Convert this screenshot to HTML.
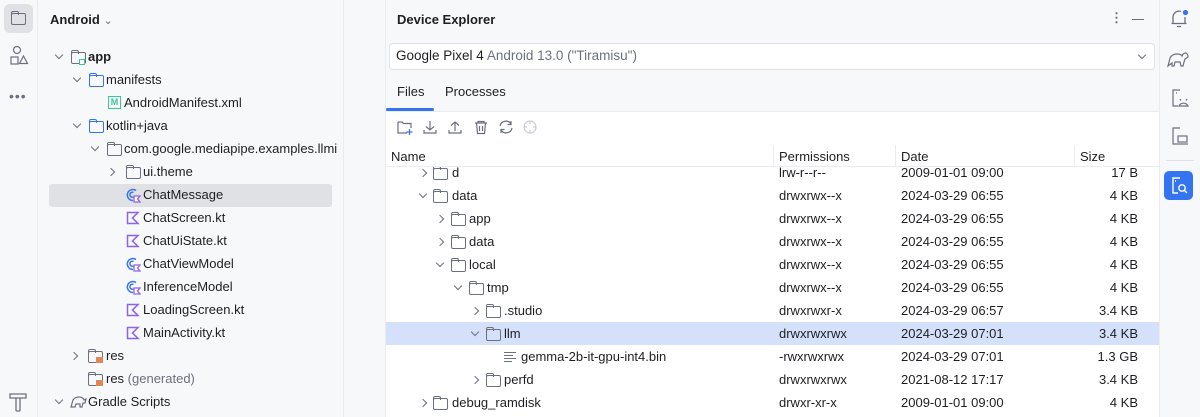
<!DOCTYPE html>
<html><head><style>
*{margin:0;padding:0;box-sizing:border-box}
body{width:1200px;height:417px;overflow:hidden;background:#f7f8fa;font-family:"Liberation Sans",sans-serif;font-size:13px;color:#1e1f22;position:relative}
.a{position:absolute;white-space:nowrap}
.vl{position:absolute;top:0;bottom:0;width:1px;background:#ebecf0}
.row{position:absolute;left:0;right:0;height:23px;line-height:23px}
.chev{position:absolute;width:6px;height:6px;border-right:1.2px solid #6c707e;border-bottom:1.2px solid #6c707e}
.dn{transform:rotate(45deg)}
.rt{transform:rotate(-45deg)}
.fold{position:absolute;width:15px;height:12px;border:1.2px solid #6c707e;border-radius:2px}
.fold:before{content:"";position:absolute;left:-1.2px;top:-3px;width:6px;height:3px;border:1.2px solid #6c707e;border-bottom:none;border-radius:2px 2px 0 0}
.bf{border-color:#3574f0}.bf:before{border-color:#3574f0}
svg.i{position:absolute;top:4px}
</style></head><body>
<!-- left strip -->
<div class="vl" style="left:37px"></div>
<div class="a" style="left:4px;top:4px;width:29px;height:29px;background:#dfe1e5;border-radius:6px"></div>
<div class="fold" style="left:11px;top:13px;width:15px;height:12px"></div>
<svg class="a" style="left:9px;top:45px" width="20" height="22" viewBox="0 0 20 22" fill="none" stroke="#6c707e" stroke-width="1.2"><circle cx="8" cy="5" r="3.5"/><rect x="2" y="12" width="7" height="7"/><path d="M14.5 11 L18.5 18.5 H10.5 Z"/></svg>
<div class="a" style="left:9px;top:88px;font-size:14px;color:#6c707e;letter-spacing:1px">•••</div>
<svg class="a" style="left:8px;top:391px" width="20" height="22" viewBox="0 0 20 22" fill="none" stroke="#6c707e" stroke-width="1.3"><path d="M2 3 H18 V7 H2 Z M8 7 V20 M12 7 V20 M8 20 H12"/></svg>
<!-- project panel -->
<div class="vl" style="left:343px"></div>
<div class="vl" style="left:385px"></div>
<div class="a" style="left:50px;top:12px;font-weight:bold;font-size:13px">Android <span style="font-weight:normal;color:#6c707e;font-size:11px">⌄</span></div>
<div class="a" style="left:49px;top:184px;width:283px;height:23px;background:#dfe1e5;border-radius:3px"></div>
<div style="position:absolute;left:0;top:45px;width:343px">
 <div class="row" style="top:0"><i class="chev dn" style="left:56px;top:7px"></i><i class="fold" style="left:71px;top:7px"></i><i class="a" style="left:79px;top:14px;width:6px;height:6px;border:1.3px solid #3fc59b;background:#fff"></i><span class="a" style="left:88px;font-weight:bold">app</span></div>
 <div class="row" style="top:23px"><i class="chev dn" style="left:74px;top:7px"></i><i class="fold bf" style="left:89px;top:7px"></i><span class="a" style="left:106px">manifests</span></div>
 <div class="row" style="top:46px"><i class="a" style="left:108px;top:5px;width:13px;height:13px;border:1.3px solid #3fc59b;font-size:9px;line-height:10px;text-align:center;color:#3fc59b;font-weight:bold;font-style:normal">M</i><span class="a" style="left:124px">AndroidManifest.xml</span></div>
 <div class="row" style="top:69px"><i class="chev dn" style="left:74px;top:7px"></i><i class="fold bf" style="left:89px;top:7px"></i><span class="a" style="left:106px">kotlin+java</span></div>
 <div class="row" style="top:92px"><i class="chev dn" style="left:92px;top:7px"></i><i class="fold" style="left:107px;top:7px"></i><span class="a" style="left:124px">com.google.mediapipe.examples.llmi</span></div>
 <div class="row" style="top:115px"><i class="chev rt" style="left:108px;top:9px"></i><i class="fold" style="left:126px;top:7px"></i><span class="a" style="left:143px">ui.theme</span></div>
 <div class="row" style="top:138px"><svg class="i" style="left:125px" width="16" height="16" viewBox="0 0 16 16" fill="none"><path d="M11 3.5 A5.5 5.5 0 1 0 8 13.5" stroke="#3574f0" stroke-width="1.5"/><path d="M8.5 5.5 A2.5 2.5 0 1 0 8.5 10" stroke="#3574f0" stroke-width="1.4"/><path d="M9 9 H15 L12.5 12 L15 15 H9 Z" stroke="#8d63e8" stroke-width="1.3" fill="#fff"/></svg><span class="a" style="left:143px">ChatMessage</span></div>
 <div class="row" style="top:161px"><svg class="i" style="left:126px;top:5px" width="14" height="14" viewBox="0 0 14 14" fill="none" stroke="#8d63e8" stroke-width="1.5"><path d="M1.5 1.5 H12 L6.5 7 L12 12.5 H1.5 Z"/></svg><span class="a" style="left:143px">ChatScreen.kt</span></div>
 <div class="row" style="top:184px"><svg class="i" style="left:126px;top:5px" width="14" height="14" viewBox="0 0 14 14" fill="none" stroke="#8d63e8" stroke-width="1.5"><path d="M1.5 1.5 H12 L6.5 7 L12 12.5 H1.5 Z"/></svg><span class="a" style="left:143px">ChatUiState.kt</span></div>
 <div class="row" style="top:207px"><svg class="i" style="left:125px" width="16" height="16" viewBox="0 0 16 16" fill="none"><path d="M11 3.5 A5.5 5.5 0 1 0 8 13.5" stroke="#3574f0" stroke-width="1.5"/><path d="M8.5 5.5 A2.5 2.5 0 1 0 8.5 10" stroke="#3574f0" stroke-width="1.4"/><path d="M9 9 H15 L12.5 12 L15 15 H9 Z" stroke="#8d63e8" stroke-width="1.3" fill="#fff"/></svg><span class="a" style="left:143px">ChatViewModel</span></div>
 <div class="row" style="top:230px"><svg class="i" style="left:125px" width="16" height="16" viewBox="0 0 16 16" fill="none"><path d="M11 3.5 A5.5 5.5 0 1 0 8 13.5" stroke="#3574f0" stroke-width="1.5"/><path d="M8.5 5.5 A2.5 2.5 0 1 0 8.5 10" stroke="#3574f0" stroke-width="1.4"/><path d="M9 9 H15 L12.5 12 L15 15 H9 Z" stroke="#8d63e8" stroke-width="1.3" fill="#fff"/></svg><span class="a" style="left:143px">InferenceModel</span></div>
 <div class="row" style="top:253px"><svg class="i" style="left:126px;top:5px" width="14" height="14" viewBox="0 0 14 14" fill="none" stroke="#8d63e8" stroke-width="1.5"><path d="M1.5 1.5 H12 L6.5 7 L12 12.5 H1.5 Z"/></svg><span class="a" style="left:143px">LoadingScreen.kt</span></div>
 <div class="row" style="top:276px"><svg class="i" style="left:126px;top:5px" width="14" height="14" viewBox="0 0 14 14" fill="none" stroke="#8d63e8" stroke-width="1.5"><path d="M1.5 1.5 H12 L6.5 7 L12 12.5 H1.5 Z"/></svg><span class="a" style="left:143px">MainActivity.kt</span></div>
 <div class="row" style="top:299px"><i class="chev rt" style="left:71px;top:9px"></i><i class="fold" style="left:88px;top:7px"></i><i class="a" style="left:96px;top:13px;width:7px;height:6px;background:#e08855"></i><span class="a" style="left:106px">res</span></div>
 <div class="row" style="top:322px"><i class="fold" style="left:88px;top:7px"></i><i class="a" style="left:96px;top:13px;width:7px;height:6px;background:#e08855"></i><span class="a" style="left:106px">res <span style="color:#6c707e">(generated)</span></span></div>
 <div class="row" style="top:345px"><i class="chev dn" style="left:56px;top:7px"></i><svg class="i" style="left:69px;top:5px" width="18" height="14" viewBox="0 0 18 14" fill="none" stroke="#6c707e" stroke-width="1.2"><path d="M2 12 L4 5 Q6 2 10 2 Q14 2 15 5 L17 4 L16 8 L14 8 L13 12 H11 L11 9 H7 L6 12 Z"/></svg><span class="a" style="left:88px">Gradle Scripts</span></div>
</div>
<!-- device explorer -->
<div class="a" style="left:397px;top:12px;font-weight:bold">Device Explorer</div>
<div class="a" style="left:1110px;top:10px;color:#6c707e;font-weight:bold">⋮</div>
<div class="a" style="left:1132px;top:19px;width:12px;height:1.3px;background:#6c707e"></div>
<div class="a" style="left:389px;top:43px;width:766px;height:27px;background:#fff;border:1px solid #dfe1e5;border-radius:4px"></div>
<div class="a" style="left:396px;top:48px;font-size:13.5px">Google Pixel 4 <span style="color:#6c707e">Android 13.0 ("Tiramisu")</span></div>
<i class="chev dn" style="left:1139px;top:52px"></i>
<div class="a" style="left:397px;top:84px">Files</div>
<div class="a" style="left:445px;top:84px">Processes</div>
<div class="a" style="left:386px;top:108px;width:48px;height:3px;background:#3574f0;border-radius:2px"></div>
<div class="a" style="left:386px;top:111px;width:773px;height:1px;background:#ebecf0"></div>
<div class="a" style="left:386px;top:112px;width:773px;height:305px;background:#fff"></div>
<svg class="a" style="left:396px;top:118px" width="150" height="18" viewBox="0 0 150 18" fill="none" stroke="#6c707e" stroke-width="1.2">
 <path d="M2 4 H6 L7.5 5.5 H15 V10 M11 15 H2 V4"/><path d="M13.5 11 V17 M10.5 14 H16.5" stroke="#3574f0"/>
 <path d="M34 3 V12 M30 8.5 L34 12 L38 8.5 M28 12 V15 H40 V12"/>
 <path d="M59 13 V4 M55 7.5 L59 4 L63 7.5 M53 12 V15 H65 V12"/>
 <path d="M79 5 H91 M82 5 V3.5 H88 V5 M80.5 5 L81.5 15.5 H88.5 L89.5 5 M83.5 8 V13 M86.5 8 V13"/>
 <path d="M104 8 A6 6 0 0 1 115 6 M116 10 A6 6 0 0 1 105 12 M115 3 V6.5 H111.5 M105 15 V11.5 H108.5"/>
 <circle cx="134" cy="9" r="6" stroke="#c9ccd6"/><path d="M134 3 V6 M134 12 V15 M128 9 H131 M137 9 H140" stroke="#c9ccd6"/>
</svg>
<div class="a" style="left:386px;top:145px;width:773px;height:22px;background:#fff;border-bottom:1px solid #ebecf0"></div>
<div class="a" style="left:773px;top:145px;width:1px;height:22px;background:#ebecf0"></div>
<div class="a" style="left:895px;top:145px;width:1px;height:22px;background:#ebecf0"></div>
<div class="a" style="left:1074px;top:145px;width:1px;height:22px;background:#ebecf0"></div>
<div class="a" style="left:391px;top:149px">Name</div>
<div class="a" style="left:779px;top:149px">Permissions</div>
<div class="a" style="left:901px;top:149px">Date</div>
<div class="a" style="left:1080px;top:149px">Size</div>
<div class="a" style="left:386px;top:322px;width:773px;height:23px;background:#d5e1fb"></div>
<div style="position:absolute;left:386px;top:167px;width:773px;height:250px;overflow:hidden">
<div style="position:absolute;left:0;top:-6px;width:773px">
 <div class="row" style="top:0"><i class="chev rt" style="left:34px;top:9px"></i><i class="fold" style="left:47px;top:7px"></i><span class="a" style="left:66px">d</span><span class="a" style="left:393px">lrw-r--r--</span><span class="a" style="left:515px">2009-01-01 09:00</span><span class="a" style="right:21px">17 B</span></div>
 <div class="row" style="top:23px"><i class="chev dn" style="left:34px;top:7px"></i><i class="fold" style="left:47px;top:7px"></i><span class="a" style="left:66px">data</span><span class="a" style="left:393px">drwxrwx--x</span><span class="a" style="left:515px">2024-03-29 06:55</span><span class="a" style="right:21px">4 KB</span></div>
 <div class="row" style="top:46px"><i class="chev rt" style="left:51px;top:9px"></i><i class="fold" style="left:65px;top:7px"></i><span class="a" style="left:83px">app</span><span class="a" style="left:393px">drwxrwx--x</span><span class="a" style="left:515px">2024-03-29 06:55</span><span class="a" style="right:21px">4 KB</span></div>
 <div class="row" style="top:69px"><i class="chev rt" style="left:51px;top:9px"></i><i class="fold" style="left:65px;top:7px"></i><span class="a" style="left:83px">data</span><span class="a" style="left:393px">drwxrwx--x</span><span class="a" style="left:515px">2024-03-29 06:55</span><span class="a" style="right:21px">4 KB</span></div>
 <div class="row" style="top:92px"><i class="chev dn" style="left:51px;top:7px"></i><i class="fold" style="left:65px;top:7px"></i><span class="a" style="left:83px">local</span><span class="a" style="left:393px">drwxrwx--x</span><span class="a" style="left:515px">2024-03-29 06:55</span><span class="a" style="right:21px">4 KB</span></div>
 <div class="row" style="top:115px"><i class="chev dn" style="left:69px;top:7px"></i><i class="fold" style="left:83px;top:7px"></i><span class="a" style="left:101px">tmp</span><span class="a" style="left:393px">drwxrwx--x</span><span class="a" style="left:515px">2024-03-29 06:55</span><span class="a" style="right:21px">4 KB</span></div>
 <div class="row" style="top:138px"><i class="chev rt" style="left:86px;top:9px"></i><i class="fold" style="left:100px;top:7px"></i><span class="a" style="left:118px">.studio</span><span class="a" style="left:393px">drwxrwxr-x</span><span class="a" style="left:515px">2024-03-29 06:57</span><span class="a" style="right:21px">3.4 KB</span></div>
 <div class="row" style="top:161px"><i class="chev dn" style="left:86px;top:7px"></i><i class="fold" style="left:100px;top:7px"></i><span class="a" style="left:118px">llm</span><span class="a" style="left:393px">drwxrwxrwx</span><span class="a" style="left:515px">2024-03-29 07:01</span><span class="a" style="right:21px">3.4 KB</span></div>
 <div class="row" style="top:184px"><svg class="i" style="left:117px;top:6px" width="14" height="12" viewBox="0 0 14 12" stroke="#6c707e" stroke-width="1.1"><path d="M1 1.5 H13 M1 4.5 H10 M1 7.5 H13 M1 10.5 H9"/></svg><span class="a" style="left:135px">gemma-2b-it-gpu-int4.bin</span><span class="a" style="left:393px">-rwxrwxrwx</span><span class="a" style="left:515px">2024-03-29 07:01</span><span class="a" style="right:21px">1.3 GB</span></div>
 <div class="row" style="top:207px"><i class="chev rt" style="left:86px;top:9px"></i><i class="fold" style="left:100px;top:7px"></i><span class="a" style="left:118px">perfd</span><span class="a" style="left:393px">drwxrwxrwx</span><span class="a" style="left:515px">2021-08-12 17:17</span><span class="a" style="right:21px">3.4 KB</span></div>
 <div class="row" style="top:230px"><i class="chev rt" style="left:34px;top:9px"></i><i class="fold" style="left:47px;top:7px"></i><span class="a" style="left:66px">debug_ramdisk</span><span class="a" style="left:393px">drwxr-xr-x</span><span class="a" style="left:515px">2009-01-01 09:00</span><span class="a" style="right:21px">4 KB</span></div>
</div></div>
<!-- right strip -->
<div class="vl" style="left:1159px"></div>
<svg class="a" style="left:1168px;top:8px" width="22" height="22" viewBox="0 0 22 22" fill="none" stroke="#6c707e" stroke-width="1.3"><path d="M5 15 V9 A6 6 0 0 1 13 3.5 M17 9 V15 M3.5 15.5 H18.5 M9 18.5 H13"/><circle cx="17.5" cy="4.5" r="2.6" fill="#3574f0" stroke="none"/></svg>
<svg class="a" style="left:1166px;top:50px" width="24" height="20" viewBox="0 0 24 20" fill="none" stroke="#6c707e" stroke-width="1.2"><path d="M2 16 L4 8 Q6 4 11 4 Q15 4 16 6 Q17 3 20 3 Q22 4 22 7 L19 9 L18 12 L17 16 H15 L14 12 H9 L8 16 H6 L6 13 Z"/></svg>
<svg class="a" style="left:1168px;top:87px" width="22" height="22" viewBox="0 0 22 22" fill="none" stroke="#6c707e" stroke-width="1.2"><path d="M12 3 H5 V19 H10 M9 6 H8"/><path d="M11 19 A5 5 0 0 1 20 19 Z M13 13.5 L12 12 M18 13.5 L19 12"/></svg>
<svg class="a" style="left:1168px;top:125px" width="22" height="22" viewBox="0 0 22 22" fill="none" stroke="#6c707e" stroke-width="1.2"><path d="M12 3 H5 V19 H9"/><rect x="10" y="11" width="9" height="6"/><path d="M9 19 H20"/></svg>
<div class="a" style="left:1166px;top:160px;width:28px;height:1px;background:#dfe1e5"></div>
<div class="a" style="left:1164px;top:171px;width:29px;height:29px;border-radius:5px;background:#3574f0"></div>
<svg class="a" style="left:1167px;top:174px" width="24" height="24" viewBox="0 0 24 24" fill="none" stroke="#fff" stroke-width="1.4"><path d="M13 4 H6 V19 H11 M9 7 H8"/><circle cx="15" cy="14" r="3.2"/><path d="M17.3 16.3 L20 19"/></svg>
</body></html>
